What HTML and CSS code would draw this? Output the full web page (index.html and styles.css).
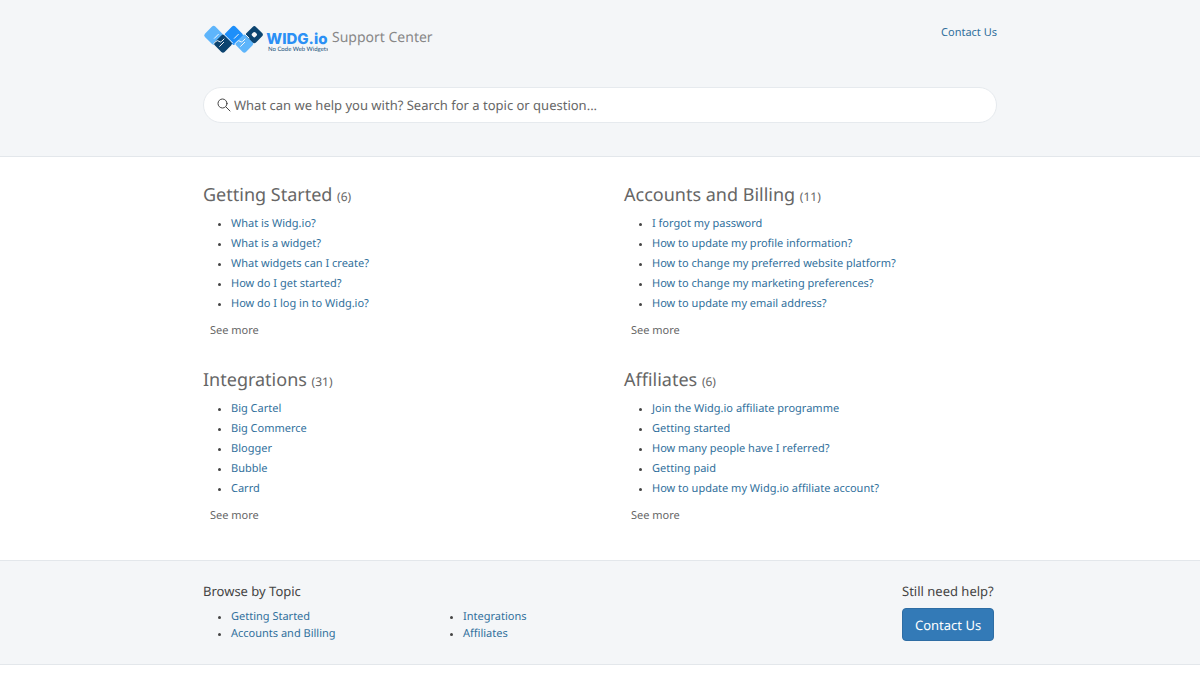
FILE: index.html
```html
<!doctype html>
<html lang="en">
<head>
    <meta charset="UTF-8">
    <meta name="viewport" content="width=device-width, initial-scale=1.0">
    <title>Widg.io Support Center</title>
    <link rel="stylesheet" href="styles.css">
</head>
<body>
    <header class="header">
        <div class="container">
            <div class="topbar">
                <a class="brand" href="#">
                    <svg class="logo" viewBox="24 24 375 96" role="img" aria-label="WIDG.io No Code Web Widgets">
                        <g transform="translate(56 61) rotate(45)">
                            <rect x="-22" y="-22" width="44" height="44" rx="7" fill="#5eb5fb"/>
                        </g>
                        <g transform="translate(116 61) rotate(45)">
                            <rect x="-22" y="-22" width="44" height="44" rx="7" fill="#1e8ffa"/>
                        </g>
                        <g transform="translate(84 86) rotate(45)">
                            <rect x="-21" y="-21" width="42" height="42" rx="7" fill="#0c4470"/>
                        </g>
                        <g transform="translate(148 86) rotate(45)">
                            <rect x="-21" y="-21" width="42" height="42" rx="7" fill="#5eb5fb"/>
                        </g>
                        <g transform="translate(178 59) rotate(45)">
                            <rect x="-20" y="-20" width="40" height="40" rx="7" fill="#0c4470"/>
                            <rect x="-7" y="-7" width="14" height="14" rx="5" fill="#f4f6f8"/>
                        </g>
                        <!-- slits where the tiles interlock -->
                        <g fill="none" stroke="#f4f6f8" stroke-width="3" stroke-linecap="round">
                            <path d="M56 86 63 79Q68 75 72 79T80 79L87 72M58 70 70 58M74 94 86 82"/>
                            <path d="M87 58 113 84M151 58 162 69"/>
                            <path d="M120 86 127 79Q131 75 135 79T143 79L150 72M118 70 130 58M137 94 149 82"/>
                        </g>
                        <text class="logo-name" x="214" y="86">WIDG.io</text>
                        <text class="logo-tagline" x="219" y="109">No Code Web Widgets</text>
                    </svg>
                    <span>Support Center</span>
                </a>
                <a class="contact-link" href="#">Contact Us</a>
            </div>
            <form class="search">
                <svg class="search-icon" viewBox="0 0 14 14" aria-hidden="true">
                    <circle cx="5.5" cy="5.5" r="4.5"/>
                    <path d="M9 9l4 4"/>
                </svg>
                <input type="search" aria-label="Search" placeholder="What can we help you with? Search for a topic or question...">
            </form>
        </div>
    </header>

    <main class="container topics">
        <section>
            <h2>Getting Started <small>(6)</small></h2>
            <ul>
                <li><a href="#">What is Widg.io?</a></li>
                <li><a href="#">What is a widget?</a></li>
                <li><a href="#">What widgets can I create?</a></li>
                <li><a href="#">How do I get started?</a></li>
                <li><a href="#">How do I log in to Widg.io?</a></li>
            </ul>
            <a class="more" href="#">See more</a>
        </section>
        <section>
            <h2>Accounts and Billing <small>(11)</small></h2>
            <ul>
                <li><a href="#">I forgot my password</a></li>
                <li><a href="#">How to update my profile information?</a></li>
                <li><a href="#">How to change my preferred website platform?</a></li>
                <li><a href="#">How to change my marketing preferences?</a></li>
                <li><a href="#">How to update my email address?</a></li>
            </ul>
            <a class="more" href="#">See more</a>
        </section>
        <section>
            <h2>Integrations <small>(31)</small></h2>
            <ul>
                <li><a href="#">Big Cartel</a></li>
                <li><a href="#">Big Commerce</a></li>
                <li><a href="#">Blogger</a></li>
                <li><a href="#">Bubble</a></li>
                <li><a href="#">Carrd</a></li>
            </ul>
            <a class="more" href="#">See more</a>
        </section>
        <section>
            <h2>Affiliates <small>(6)</small></h2>
            <ul>
                <li><a href="#">Join the Widg.io affiliate programme</a></li>
                <li><a href="#">Getting started</a></li>
                <li><a href="#">How many people have I referred?</a></li>
                <li><a href="#">Getting paid</a></li>
                <li><a href="#">How to update my Widg.io affiliate account?</a></li>
            </ul>
            <a class="more" href="#">See more</a>
        </section>
    </main>

    <footer class="footer">
        <div class="container footer-inner">
            <nav class="browse">
                <h3>Browse by Topic</h3>
                <ul>
                    <li><a href="#">Getting Started</a></li>
                    <li><a href="#">Integrations</a></li>
                    <li><a href="#">Accounts and Billing</a></li>
                    <li><a href="#">Affiliates</a></li>
                </ul>
            </nav>
            <div class="help">
                <h3>Still need help?</h3>
                <button type="button">Contact Us</button>
            </div>
        </div>
    </footer>
</body>
</html>
```

FILE: styles.css
```css
* {
    box-sizing: border-box;
}

body {
    margin: 0;
    background-color: #fff;
    color: #444;
    font-family: "Noto Sans", sans-serif;
    font-size: 11px;
    line-height: 20px;
    text-rendering: geometricPrecision;
}

a {
    color: #31709c;
    text-decoration: none;
}

a:hover {
    text-decoration: underline;
}

ul {
    margin: 0;
    padding-left: 28px;
}

li::marker {
    font-size: 9px;
}

.container {
    max-width: 826px;
    margin: 0 auto;
    padding: 0 16px;
}

/* header */
.header {
    background-color: #f4f6f8;
    border-bottom: 1px solid #e3e7eb;
    padding: 23px 0 33px;
}

.topbar {
    display: flex;
    justify-content: space-between;
    align-items: flex-start;
    margin-bottom: 32px;
}

.brand {
    display: flex;
    align-items: flex-start;
    gap: 4px;
    color: #888;
    font-size: 14px;
    line-height: 30px;
}

.logo {
    width: 125px;
    height: 32px;
}

.logo-name {
    font-family: Inter, sans-serif;
    font-size: 45px;
    font-weight: 800;
    fill: #2b90f5;
}

.logo-tagline {
    font-family: Lato, sans-serif;
    font-size: 18px;
    fill: #25557d;
}

.search {
    display: flex;
    align-items: center;
    gap: 3px;
    height: 36px;
    padding: 0 13px;
    background-color: #fff;
    border: 1px solid #e6eaee;
    border-radius: 18px;
}

.search-icon {
    width: 14px;
    height: 14px;
    fill: none;
    stroke: #444;
    stroke-linecap: round;
}

.search input {
    flex: 1;
    min-width: 0;
    padding: 0;
    border: none;
    outline: none;
    background: none;
    color: #555;
    font-family: inherit;
    font-size: 13px;
    text-rendering: inherit;
}

.search input::placeholder {
    color: #666;
    opacity: 1;
}

/* topic lists */
.topics {
    display: grid;
    grid-template-columns: repeat(2, 1fr);
    gap: 25px 48px;
    padding-top: 24px;
    padding-bottom: 34px;
}

.topics h2 {
    margin: 0 0 5px;
    color: #666;
    font-size: 18px;
    font-weight: 400;
    line-height: 28px;
}

.topics small {
    font-size: 12px;
    line-height: 1;
}

.more {
    display: block;
    margin: 7px 0 0 7px;
    color: #666;
}

/* footer */
.footer {
    background-color: #f4f6f8;
    border-top: 1px solid #e3e7eb;
    border-bottom: 1px solid #e3e7eb;
    padding: 20px 0 22px;
}

.footer-inner {
    display: flex;
    justify-content: space-between;
}

.footer h3 {
    margin: 0 0 6px;
    font-size: 13px;
    font-weight: 400;
    line-height: 21px;
}

.browse {
    width: 464px;
}

.browse ul {
    display: grid;
    grid-template-columns: repeat(2, 1fr);
    padding: 0;
    line-height: 17px;
}

.browse li {
    margin-left: 28px;
}

.help {
    min-width: 95px;
}

.help button {
    display: block;
    height: 33px;
    padding: 0 12px;
    background-color: #337ab7;
    color: #fff;
    border: 1px solid #2e6da4;
    border-radius: 4px;
    font-family: inherit;
    font-size: 13px;
    text-rendering: inherit;
    cursor: pointer;
}
```
